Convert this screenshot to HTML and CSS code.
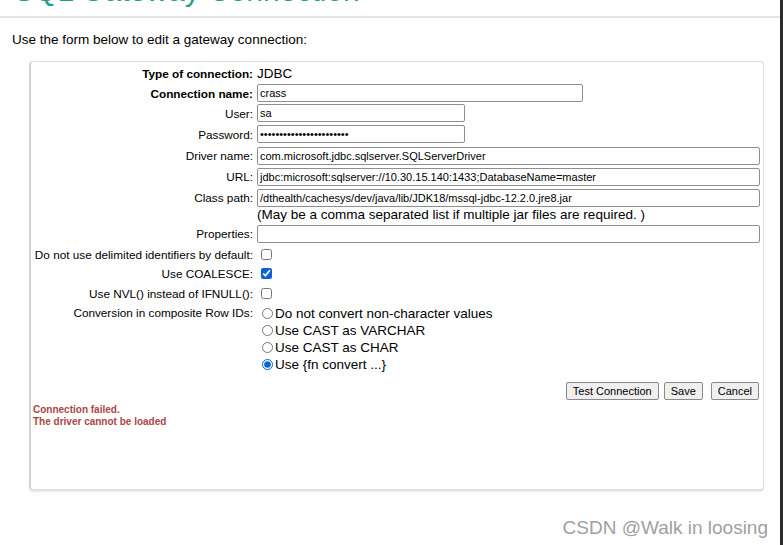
FILE: index.html
```html
<!DOCTYPE html>
<html lang="en">

<head>
    <meta charset="UTF-8">
    <title>SQL Gateway Connection</title>
    <link rel="stylesheet" href="styles.css">
</head>

<body>
    <div class="page">

        <!-- Cabeçalho (cortado no topo) -->
        <div class="header">
            <h1>SQL Gateway Connection</h1>
        </div>

        <p class="intro">Use the form below to edit a gateway connection:</p>

        <div class="form-box">
            <table class="form-table">
                <tr class="row-20">
                    <td class="label bold">Type of connection:</td>
                    <td class="value">JDBC</td>
                </tr>
                <tr class="row-20">
                    <td class="label bold">Connection name:</td>
                    <td><input type="text" class="field field-md" value="crass"></td>
                </tr>
                <tr class="row-20">
                    <td class="label">User:</td>
                    <td><input type="text" class="field field-sm" value="sa"></td>
                </tr>
                <tr class="row-22">
                    <td class="label">Password:</td>
                    <td><input type="password" class="field field-sm" value="xxxxxxxxxxxxxxxxxxxxxxx"></td>
                </tr>
                <tr class="row-21">
                    <td class="label">Driver name:</td>
                    <td><input type="text" class="field field-lg" value="com.microsoft.jdbc.sqlserver.SQLServerDriver"></td>
                </tr>
                <tr class="row-21">
                    <td class="label">URL:</td>
                    <td><input type="text" class="field field-lg" value="jdbc:microsoft:sqlserver://10.30.15.140:1433;DatabaseName=master"></td>
                </tr>
                <tr class="row-21">
                    <td class="label">Class path:</td>
                    <td><input type="text" class="field field-lg" value="/dthealth/cachesys/dev/java/lib/JDK18/mssql-jdbc-12.2.0.jre8.jar"></td>
                </tr>
                <tr class="row-15">
                    <td></td>
                    <td class="value note">(May be a comma separated list if multiple jar files are required. )</td>
                </tr>
                <tr class="row-21">
                    <td class="label">Properties:</td>
                    <td><input type="text" class="field field-lg" value=""></td>
                </tr>
                <tr class="row-20">
                    <td class="label">Do not use delimited identifiers by default:</td>
                    <td><input type="checkbox" class="check"></td>
                </tr>
                <tr class="row-19">
                    <td class="label">Use COALESCE:</td>
                    <td><input type="checkbox" class="check" checked></td>
                </tr>
                <tr class="row-20">
                    <td class="label">Use NVL() instead of IFNULL():</td>
                    <td><input type="checkbox" class="check"></td>
                </tr>
                <tr>
                    <td class="label top">Conversion in composite Row IDs:</td>
                    <td class="radios">
                        <label class="radio-line"><input type="radio" name="conv" class="radio">Do not convert non-character values</label>
                        <label class="radio-line"><input type="radio" name="conv" class="radio">Use CAST as VARCHAR</label>
                        <label class="radio-line"><input type="radio" name="conv" class="radio">Use CAST as CHAR</label>
                        <label class="radio-line"><input type="radio" name="conv" class="radio" checked>Use {fn convert ...}</label>
                    </td>
                </tr>
            </table>

            <div class="actions">
                <button class="btn">Test Connection</button>
                <button class="btn">Save</button>
                <button class="btn btn-cancel">Cancel</button>
            </div>

            <div class="error">
                <p>Connection failed.</p>
                <p>The driver cannot be loaded</p>
            </div>
        </div>

        <div class="watermark">CSDN @Walk in loosing</div>
    </div>
</body>

</html>
```

FILE: styles.css
```css
body {
    margin: 0;
    background: #ffffff;
    font-family: "Liberation Sans", Arial, sans-serif;
    color: #000;
}

.page {
    position: relative;
    height: 545px;
    overflow: hidden;
    border-right: 3px solid #2b2b2b;
}

.header {
    height: 16px;
    overflow: hidden;
    border-bottom: 2px solid #e4e4e4;
}

.header h1 {
    margin: -24px 0 0 14px;
    font-size: 30px;
    line-height: 30px;
    font-weight: normal;
    color: #1fa08f;
}

.intro {
    margin: 14px 0 0 12px;
    font-size: 13.5px;
    line-height: 16px;
}

.form-box {
    margin: 13px 0 0 29px;
    width: 732px;
    height: 426px;
    border: 1px solid #dcdcdc;
    border-left: 2px solid #d4d4d4;
    border-radius: 4px;
    box-shadow: 0 2px 1px #e6e6e6;
    padding-top: 1px;
}

.form-table {
    border-collapse: collapse;
    margin-left: 2px;
}

.form-table td {
    padding: 0;
}

.row-15 { height: 15px; }
.row-19 { height: 19px; }
.row-20 { height: 20px; }
.row-21 { height: 21px; }
.row-22 { height: 22px; }

.form-table .label {
    width: 220px;
    padding-right: 4px;
    text-align: right;
    font-size: 11.75px;
    white-space: nowrap;
}

.form-table .label.bold {
    font-weight: bold;
}

.form-table .label.top {
    vertical-align: top;
    padding-top: 3px;
}

.form-table .value {
    font-size: 13.5px;
}

.form-table .note {
    vertical-align: top;
    line-height: 14px;
}

.field {
    box-sizing: border-box;
    display: block;
    height: 18px;
    padding: 0 2px;
    border: 1px solid #8f8f8f;
    border-radius: 2px;
    font-family: "Liberation Sans", Arial, sans-serif;
    font-size: 11px;
    color: #000;
}

.field-sm { width: 208px; }
.field-md { width: 326px; }
.field-lg { width: 503px; }

.check {
    width: 11px;
    height: 11px;
    margin: 0 0 0 4px;
    display: block;
    accent-color: #0a64d8;
}

.form-table .radios {
    padding-top: 2px;
}

.radio-line {
    display: flex;
    align-items: center;
    height: 17px;
    font-size: 13.5px;
}

.radio {
    width: 11px;
    height: 11px;
    margin: 0 2px 0 5px;
    accent-color: #0a64d8;
}

.actions {
    display: flex;
    justify-content: flex-end;
    gap: 5px;
    margin: 9px 4px 0 0;
}

.btn {
    height: 18px;
    padding: 0 6px;
    font-family: "Liberation Sans", Arial, sans-serif;
    font-size: 11px;
    color: #000;
    background: #efefef;
    border: 1px solid #8a8a8a;
    border-radius: 2px;
}

.btn-cancel {
    margin-left: 3px;
}

.error {
    margin: 4px 0 0 2px;
    font-size: 10px;
    font-weight: bold;
    color: #ad4545;
}

.error p {
    margin: 0;
    line-height: 12px;
}

.watermark {
    position: absolute;
    right: 12px;
    bottom: 6px;
    font-size: 19px;
    color: #a0a0a0;
}
```
